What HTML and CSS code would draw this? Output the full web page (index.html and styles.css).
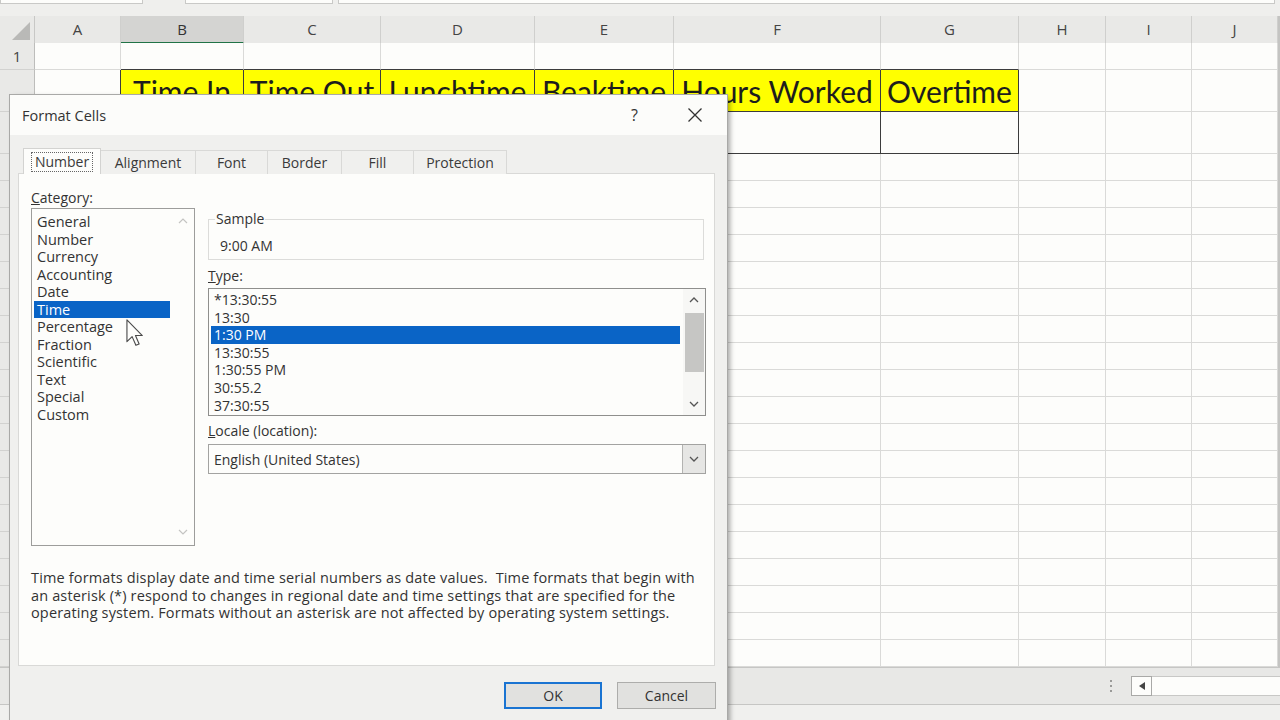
FILE: index.html
```html
<!DOCTYPE html>
<html lang="en">
<head>
<meta charset="utf-8">
<title>Format Cells</title>
<link rel="stylesheet" href="styles.css">
</head>
<body>
<div class="app">
  <div class="topbar"><span class="tb tb1"></span><span class="tb tb2"></span><span class="tb tb3"></span></div>
  <div class="sheet">
    <div class="grid colhdr">
      <div class="corner"><svg width="18" height="18" viewBox="0 0 18 18"><polygon points="18,0 18,18 0,18" fill="#b9b9b7"/></svg></div>
      <div class="ch">A</div><div class="ch sel">B</div><div class="ch">C</div><div class="ch">D</div><div class="ch">E</div><div class="ch">F</div><div class="ch">G</div><div class="ch">H</div><div class="ch">I</div><div class="ch">J</div>
    </div>
    <div class="grid r1">
      <div class="rh">1</div>
      <div class="c"></div><div class="c bb"></div><div class="c bb"></div><div class="c bb"></div><div class="c bb"></div><div class="c bb"></div><div class="c bb"></div><div class="c"></div><div class="c"></div><div class="c"></div>
    </div>
    <div class="grid r2">
      <div class="rh"></div>
      <div class="c br"></div>
      <div class="c hd">Time In</div><div class="c hd">Time Out</div><div class="c hd">Lunchtime</div><div class="c hd">Beaktime</div><div class="c hd">Hours Worked</div><div class="c hd">Overtime</div>
      <div class="c"></div><div class="c"></div><div class="c"></div>
    </div>
    <div class="grid r3">
      <div class="rh"></div>
      <div class="c br"></div>
      <div class="c tbx"></div><div class="c tbx"></div><div class="c tbx"></div><div class="c tbx"></div><div class="c tbx"></div><div class="c tbx"></div>
      <div class="c"></div><div class="c"></div><div class="c"></div>
    </div>
    <div class="grid rest">
      <div class="rh"></div>
      <div class="c"></div><div class="c"></div><div class="c"></div><div class="c"></div><div class="c"></div><div class="c"></div><div class="c"></div><div class="c"></div><div class="c"></div><div class="c"></div>
    </div>
  </div>
  <div class="sheetbar">
    <div class="dots"><i></i><i></i><i></i></div>
    <div class="hscroll">
      <div class="hs-left"><svg width="6" height="8" viewBox="0 0 6 8"><polygon points="6,0 6,8 0,4" fill="#444"/></svg></div>
      <div class="hs-track"></div>
    </div>
  </div>
  <div class="statusbar"></div>
</div>

<div class="dialog">
  <div class="titlebar">
    <span class="title">Format Cells</span>
    <span class="help">?</span>
    <span class="close"><svg width="14" height="14" viewBox="0 0 14 14"><path d="M0.5 0.5 L13.5 13.5 M13.5 0.5 L0.5 13.5" stroke="#333" stroke-width="1.3" fill="none"/></svg></span>
  </div>
  <div class="dbody">
    <div class="tabs">
      <div class="tab active t-number"><span class="focus">Number</span></div>
      <div class="tab t-align">Alignment</div>
      <div class="tab t-font">Font</div>
      <div class="tab t-border">Border</div>
      <div class="tab t-fill">Fill</div>
      <div class="tab t-prot">Protection</div>
    </div>
    <div class="panel">
      <div class="top">
        <div class="catcol">
          <div class="lbl cat-lbl"><u>C</u>ategory:</div>
          <div class="catlist">
            <ul class="items">
              <li>General</li><li>Number</li><li>Currency</li><li>Accounting</li><li>Date</li><li class="sel">Time</li><li>Percentage</li><li>Fraction</li><li>Scientific</li><li>Text</li><li>Special</li><li>Custom</li>
            </ul>
            <div class="vscroll off">
              <svg class="chev" width="10" height="6" viewBox="0 0 10 6"><path d="M1 5 L5 1 L9 5" stroke="#c4c4c2" stroke-width="1.2" fill="none"/></svg>
              <svg class="chev" width="10" height="6" viewBox="0 0 10 6"><path d="M1 1 L5 5 L9 1" stroke="#c4c4c2" stroke-width="1.2" fill="none"/></svg>
            </div>
          </div>
        </div>
        <div class="rightcol">
          <fieldset class="sample">
            <legend>Sample</legend>
            <div class="sval">9:00 AM</div>
          </fieldset>
          <div class="lbl type-lbl"><u>T</u>ype:</div>
          <div class="typelist">
            <ul class="items">
              <li>*13:30:55</li><li>13:30</li><li class="sel">1:30 PM</li><li>13:30:55</li><li>1:30:55 PM</li><li>30:55.2</li><li>37:30:55</li>
            </ul>
            <div class="vscroll on">
              <div class="arr"><svg width="10" height="6" viewBox="0 0 10 6"><path d="M1 5 L5 1 L9 5" stroke="#555" stroke-width="1.3" fill="none"/></svg></div>
              <div class="thumb"></div>
              <div class="spacer"></div>
              <div class="arr"><svg width="10" height="6" viewBox="0 0 10 6"><path d="M1 1 L5 5 L9 1" stroke="#555" stroke-width="1.3" fill="none"/></svg></div>
            </div>
          </div>
          <div class="lbl loc-lbl"><u>L</u>ocale (location):</div>
          <div class="combo">
            <span class="cval">English (United States)</span>
            <span class="dd"><svg width="10" height="6" viewBox="0 0 10 6"><path d="M1 1 L5 5 L9 1" stroke="#555" stroke-width="1.3" fill="none"/></svg></span>
          </div>
        </div>
      </div>
      <p class="desc">Time formats display date and time serial numbers as date values.&nbsp; Time formats that begin with<br>an asterisk (*) respond to changes in regional date and time settings that are specified for the<br>operating system. Formats without an asterisk are not affected by operating system settings.</p>
    </div>
    <div class="buttons">
      <button class="btn ok">OK</button>
      <button class="btn cancel">Cancel</button>
    </div>
  </div>
</div>

<svg class="cursor" width="17" height="28" viewBox="0 0 12 20"><path d="M0.6 0.6 L0.6 16.2 L4.3 12.6 L7 18.8 L9.3 17.8 L6.7 11.8 L11.6 11.8 Z" fill="#fdfdfb" stroke="#4a4a4a" stroke-width="0.8" stroke-linejoin="round"/></svg>
</body>
</html>
```

FILE: styles.css
```css
* { box-sizing: border-box; }
html, body { margin: 0; padding: 0; }
body {
  width: 1280px;
  height: 720px;
  overflow: hidden;
  position: relative;
  background: #fdfdfb;
  font-family: "Open Sans", "Noto Sans", sans-serif;
  color: #2f2f2f;
}

/* ---------- spreadsheet ---------- */
.app { display: flex; flex-direction: column; height: 720px; }
.topbar { height: 16px; flex: none; background: #efefed; display: flex; align-items: flex-start; }
.tb { height: 4px; background: #fdfdfb; border: 1px solid #c9c9c7; border-top: 0; }
.tb1 { width: 143px; }
.tb2 { width: 148px; margin-left: 42px; }
.tb3 { width: 937px; margin-left: 5px; }

.sheet { flex: none; height: 651px; background: #c4c4c2; }
.grid {
  display: grid;
  grid-template-columns: 35px 86px 123px 137px 154px 139px 207px 138px 87px 86px 86px;
}
.colhdr { height: 27px; }
.corner { background: #e9e9e7; border-right: 1px solid #c8c8c6; border-bottom: 1px solid #bdbdbb; display: flex; align-items: flex-end; justify-content: flex-end; padding: 0 4px 3px 0; }
.corner svg { display: block; }
.ch {
  background: #e9e9e7;
  border-right: 1px solid #cfcfcd;
  border-bottom: 1px solid #bdbdbb;
  text-align: center;
  font-size: 15px;
  line-height: 26px;
  color: #444;
}
.ch.sel { background: #d4d4d2; border-bottom: 2px solid #217346; color: #333; }

.rh {
  background: #e9e9e7;
  border-right: 1px solid #bdbdbb;
  border-bottom: 1px solid #d2d2d0;
  font-size: 15px;
  line-height: 26px;
  text-align: center;
  color: #444;
}
.c { background: #fdfdfb; border-right: 1px solid #dadad8; border-bottom: 1px solid #dadad8; }
.r1 { height: 27px; }
.r2, .r3 { height: 42px; }
.c.bb { border-bottom-color: #3c3c3c; }
.c.br { border-right-color: #3c3c3c; }
.c.tbx { border-right-color: #3c3c3c; border-bottom-color: #3c3c3c; }
.c.hd {
  background: #ffff00;
  border-right-color: #3c3c3c;
  border-bottom-color: #3c3c3c;
  font-family: Lato, "Open Sans", sans-serif;
  font-size: 30px;
  line-height: 1;
  color: #1d1d1d;
  display: flex;
  align-items: flex-end;
  justify-content: center;
  padding-bottom: 5px;
  white-space: nowrap;
  overflow: hidden;
}
.rest { height: 513px; }
.rest .c, .rest .rh {
  border-bottom: 0;
  background-image: repeating-linear-gradient(to bottom, transparent 0 26px, #dadad8 26px 27px);
}
.rest .rh { background-color: #e9e9e7; background-image: repeating-linear-gradient(to bottom, transparent 0 26px, #d2d2d0 26px 27px); }

.sheetbar {
  flex: none;
  height: 38px;
  background: #e8e8e6;
  border-top: 1px solid #c6c6c4;
  border-bottom: 1px solid #c6c6c4;
  display: flex;
  align-items: center;
  justify-content: flex-end;
}
.dots { display: flex; flex-direction: column; gap: 3px; margin-right: 19px; }
.dots i { display: block; width: 2px; height: 2px; background: #9a9a98; }
.hscroll { display: flex; height: 20px; width: 149px; }
.hs-left { width: 21px; height: 20px; background: #fdfdfb; border: 1px solid #a9a9a7; display: flex; align-items: center; justify-content: center; }
.hs-track { flex: 1; background: #fdfdfb; border-top: 1px solid #c8c8c6; border-bottom: 1px solid #c8c8c6; }
.statusbar { flex: 1; background: #f0f0ee; }

/* ---------- dialog ---------- */
.dialog {
  position: absolute;
  left: 10px;
  top: 95px;
  width: 717px;
  height: 640px;
  background: #f0f0ee;
  box-shadow: 0 0 0 1px #a9a9a7, 3px 2px 5px rgba(0, 0, 0, 0.35);
  display: flex;
  flex-direction: column;
}
.titlebar { height: 40px; flex: none; background: #fcfcfa; display: flex; align-items: center; padding-left: 12px; }
.title { flex: 1; font-size: 14.5px; color: #333; }
.help { font-size: 16px; color: #333; margin-right: 50px; }
.close { width: 14px; height: 14px; margin-right: 25px; display: flex; }

.dbody { flex: 1; padding: 13px 12px 0 8px; display: flex; flex-direction: column; }
.tabs { display: flex; align-items: flex-end; height: 26px; margin-left: 5px; margin-bottom: -1px; position: relative; z-index: 1; }
.tab {
  height: 24px;
  border: 1px solid #d9d9d7;
  border-bottom: 0;
  margin-right: -1px;
  background: #f0f0ee;
  font-size: 14px;
  color: #3a3a3a;
  display: flex;
  align-items: center;
  justify-content: center;
}
.tab.active { height: 26px; background: #fdfdfb; border-color: #d3d3d1; position: relative; z-index: 2; }
.focus { border: 1px dotted #666; padding: 0 3px; line-height: 18px; }
.t-number { width: 78px; }
.t-align { width: 96px; }
.t-font { width: 73px; }
.t-border { width: 75px; }
.t-fill { width: 73px; }
.t-prot { width: 94px; }

.panel {
  height: 493px;
  flex: none;
  background: #fdfdfb;
  border: 1px solid #d9d9d7;
  padding: 12px 8px 0 12px;
}
.top { display: flex; gap: 13px; }
.catcol { width: 164px; }
.rightcol { width: 498px; }
.lbl { font-size: 14px; line-height: 19px; height: 19px; color: #333; }
.cat-lbl { padding-top: 2px; height: 20px; margin-bottom: 2px; }

.items { list-style: none; margin: 0; flex: 1; font-size: 14.5px; line-height: 17.55px; color: #333; white-space: nowrap; }
.items li { padding-left: 3px; }
.items li.sel { background: #0a64c6; color: #fff; }

.catlist { margin-top: 0; height: 338px; border: 1px solid #9d9d9b; display: flex; }
.catlist .items { padding: 4px 2px 0 2px; }
.vscroll { width: 22px; flex: none; display: flex; flex-direction: column; align-items: center; }
.vscroll.off { justify-content: space-between; padding: 9px 0 10px; }
.chev { display: block; }

.sample { margin: 24px 2px 0 0; padding: 8px 11px 3px; border: 1px solid #dcdcda; }
.sample legend { font-size: 14px; line-height: 18px; padding: 0 1px; margin-left: -5px; color: #333; }
.sval { font-size: 14px; line-height: 20px; color: #333; }
.type-lbl { margin-top: 6px; }

.typelist { margin-top: 3px; height: 128px; border: 1px solid #8f8f8d; display: flex; }
.typelist .items { padding: 2px 3px 0 2px; font-size: 14px; line-height: 17.6px; }
.vscroll.on { background: #f7f7f5; }
.arr { height: 22px; width: 22px; display: flex; align-items: center; justify-content: center; }
.thumb { width: 19px; height: 59px; margin-top: 2px; background: #c6c6c4; }
.spacer { flex: 1; }

.loc-lbl { margin-top: 5px; }
.combo { margin-top: 4px; height: 30px; border: 1px solid #a3a3a1; display: flex; align-items: center; padding-left: 5px; }
.cval { font-size: 14px; color: #333; }
.dd { margin-left: auto; width: 23px; height: 28px; background: #e6e6e4; border-left: 1px solid #b3b3b1; display: flex; align-items: center; justify-content: center; }

.desc { margin: 23px 0 0 0; font-size: 14.5px; letter-spacing: 0.15px; line-height: 17.6px; color: #333; white-space: nowrap; }

.buttons { display: flex; justify-content: flex-end; gap: 15px; margin-top: 16px; margin-right: -1px; }
.btn {
  height: 27px;
  background: #e1e1df;
  border: 1px solid #adadab;
  font-family: "Open Sans", "Noto Sans", sans-serif;
  font-size: 14px;
  color: #333;
  padding: 0;
}
.btn.ok { width: 98px; border: 2px solid #1a74d2; }
.btn.cancel { width: 99px; }

.cursor { position: absolute; left: 126px; top: 319px; }
```
